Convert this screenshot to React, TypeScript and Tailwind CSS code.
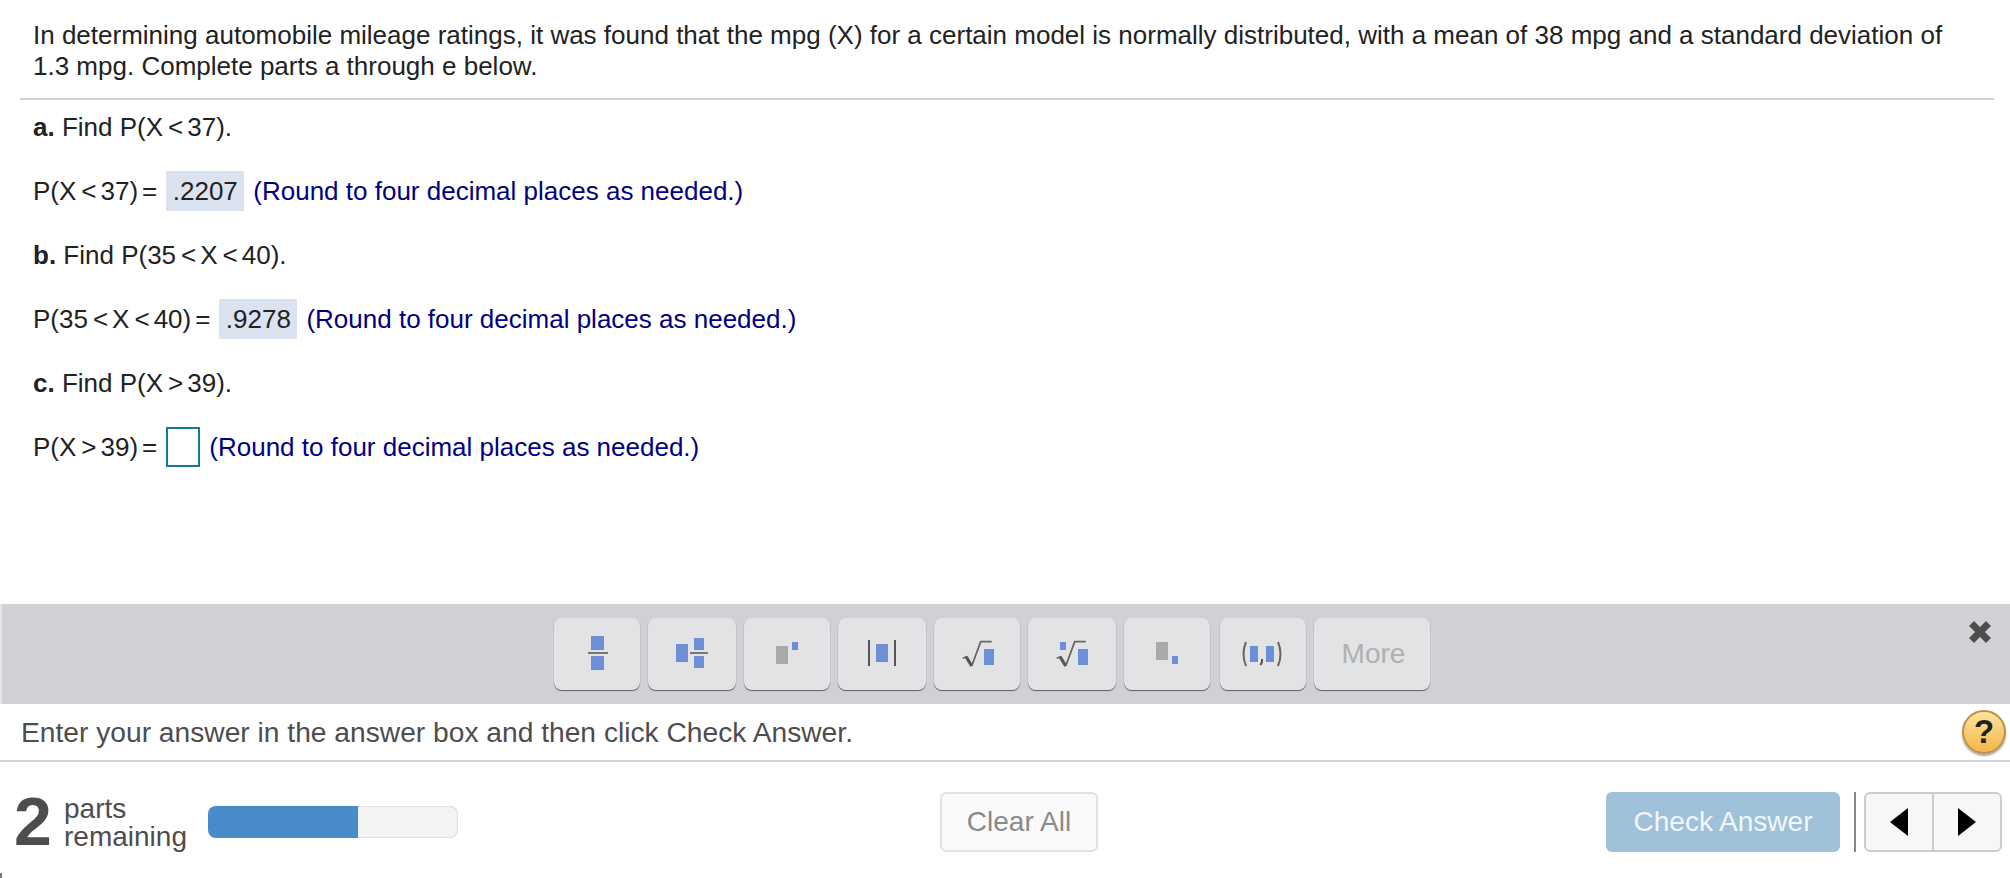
const FONT = "font-['Liberation_Sans',Arial,sans-serif]"

const BLUE = "#6d8fd6"

function Lt() {
  return <span className="mr-[4px] ml-[5px]">&lt;</span>
}

function Gt() {
  return <span className="mr-[4px] ml-[5px]">&gt;</span>
}

function Hint() {
  return <span className="text-[#000080]">(Round to four decimal places as needed.)</span>
}

function Filled({ value }: { value: string }) {
  return <span className="mx-[9px] flex h-10 w-[78px] items-center justify-center bg-[#dbe2f0]">{value}</span>
}

function ToolButton({ width, children }: { width: string; children: React.ReactNode }) {
  return (
    <button className={`${width} flex h-[72px] items-center justify-start rounded-lg bg-[#e2e3e5] shadow-[0_1px_1px_rgba(0,0,0,0.55)]`}>
      {children}
    </button>
  )
}

function Glyph({ children }: { children: React.ReactNode }) {
  return (
    <svg width="86" height="72" viewBox="0 0 86 72" fill="none">
      {children}
    </svg>
  )
}

function Radical() {
  return (
    <>
      <path d="M28.700 40.300l4-1.600" stroke="#666" strokeWidth="1.500" />
      <path d="M32 38.500l5.700 9.500" stroke="#555" strokeWidth="3.200" />
      <path d="M37.700 48l9-24.300h11" stroke="#666" strokeWidth="1.800" />
    </>
  )
}

const TOOLS: React.ReactNode[] = [
  <>
    <rect x="37" y="18" width="13" height="14" fill={BLUE} />
    <rect x="34" y="34" width="20" height="2" fill="#777" />
    <rect x="37" y="38" width="13" height="14" fill={BLUE} />
  </>,
  <>
    <rect x="28" y="26" width="12" height="18" fill={BLUE} />
    <rect x="46" y="20" width="10" height="12" fill={BLUE} />
    <rect x="42" y="34" width="18" height="2" fill="#777" />
    <rect x="46" y="38" width="10" height="12" fill={BLUE} />
  </>,
  <>
    <rect x="32" y="28" width="12" height="18" fill="#aaa" />
    <rect x="48" y="24" width="6" height="8" fill={BLUE} />
  </>,
  <>
    <rect x="30" y="22" width="2" height="26" fill="#555" />
    <rect x="38" y="26" width="12" height="18" fill={BLUE} />
    <rect x="56" y="22" width="2" height="26" fill="#555" />
  </>,
  <>
    <Radical />
    <rect x="50" y="31" width="10" height="16" fill={BLUE} />
  </>,
  <>
    <rect x="32" y="24" width="6" height="8" fill={BLUE} />
    <Radical />
    <rect x="50" y="31" width="10" height="16" fill={BLUE} />
  </>,
  <>
    <rect x="32" y="24" width="12" height="18" fill="#aaa" />
    <rect x="48" y="38" width="6" height="8" fill={BLUE} />
  </>,
  <>
    <path d="M26 24q-5 12 0 24" stroke="#666" strokeWidth="2" />
    <rect x="30" y="28" width="8" height="16" fill={BLUE} />
    <path d="M42 41v3l-1.500 3" stroke="#555" strokeWidth="2" />
    <rect x="46" y="28" width="8" height="16" fill={BLUE} />
    <path d="M58 24q5 12 0 24" stroke="#666" strokeWidth="2" />
  </>,
]

const WIDTHS = ["w-[86px]", "w-[88px]", "w-[86px]", "w-[88px]", "w-[86px]", "w-[88px]", "w-[86px]", "ml-[2px] w-[86px]"]

export default function App() {
  return (
    <div className={`${FONT} relative flex h-[878px] w-[2010px] flex-col overflow-hidden bg-white text-[26px] text-[#222]`}>
      {/* Question */}
      <div className="px-[33px] pt-[20px] pb-[16px] leading-[31px]">
        In determining automobile mileage ratings, it was found that the mpg (X) for a certain model is normally distributed, with a mean of 38 mpg and a standard deviation of
        <br />
        1.3 mpg. Complete parts a through e below.
      </div>
      <div className="mx-[20px] h-[2px] w-[1974px] bg-[#d0d3df]" />

      {/* Parts */}
      <div className="flex flex-col gap-6 px-[33px] pt-[7px] leading-10">
        <div><b>a.</b> Find P(X<Lt />37).</div>
        <div className="flex h-10 items-center">
          P(X<Lt />37)<span className="ml-[4px]">=</span>
          <Filled value=".2207" />
          <Hint />
        </div>
        <div><b>b.</b> Find P(35<Lt />X<Lt />40).</div>
        <div className="flex h-10 items-center">
          P(35<Lt />X<Lt />40)<span className="ml-[4px]">=</span>
          <Filled value=".9278" />
          <Hint />
        </div>
        <div><b>c.</b> Find P(X<Gt />39).</div>
        <div className="flex h-10 items-center">
          P(X<Gt />39)<span className="ml-[4px]">=</span>
          <span className="mr-[9px] ml-[9px] h-10 w-[34px] border-2 border-[#117a9c]" />
          <Hint />
        </div>
      </div>

      {/* Math palette */}
      <div className="mt-[137px] flex h-[100px] items-start border-l-2 border-[#e4e5ea] bg-[#d0d1d7] pt-[14px] pr-[18px] pl-[552px]">
        <div className="flex gap-2">
          {TOOLS.map((glyph, i) => (
            <ToolButton key={i} width={WIDTHS[i]}>
              <Glyph>{glyph}</Glyph>
            </ToolButton>
          ))}
          <ToolButton width="w-[116px]">
            <span className="w-full pl-[3px] text-[28px] text-[#b0b0b0]">More</span>
          </ToolButton>
        </div>
        <svg className="mt-[2px] ml-auto" width="24" height="24" viewBox="0 0 24 24">
          <path d="M3.500 3.500l17 17M20.500 3.500l-17 17" stroke="#4d4d4d" strokeWidth="7" />
        </svg>
      </div>

      {/* Instruction */}
      <div className="flex h-[58px] items-center justify-between border-b-2 border-[#d0d3df] pr-[4px] pl-[21px] text-[28.2px] text-[#4d4d4d]">
        <span>Enter your answer in the answer box and then click Check Answer.</span>
        <span className="flex h-[44px] w-[44px] items-center justify-center rounded-full border-2 border-[#b8944a] bg-[linear-gradient(#fee39a,#f3b64a)] text-[33px] font-bold text-[#222] shadow-[0_2px_2px_rgba(0,0,0,0.35)]">
          ?
        </span>
      </div>

      {/* Footer */}
      <div className="flex flex-1 items-start pt-[30px] text-[28px] text-[#4d4d4d]">
        <span className="mt-[-5px] ml-[14px] w-[50px] text-[68px] leading-[68px] font-bold">2</span>
        <span className="mt-[3px] w-[144px] leading-[28px]">
          parts
          <br />
          remaining
        </span>
        <div className="mt-[14px] h-8 w-[250px] overflow-hidden rounded-lg bg-[#f4f4f4] shadow-[inset_0_0_2px_rgba(0,0,0,0.25)]">
          <div className="h-full w-[150px] bg-[#478bc8]" />
        </div>
        <button className="ml-[482px] h-[60px] w-[158px] rounded-md border-2 border-[#e2e2e2] bg-[#fafafa] text-[#8a8a8a]">
          Clear All
        </button>
        <button className="ml-[508px] h-[60px] w-[234px] rounded-md bg-[#9fc2da] text-[#f2f7fa]">
          Check Answer
        </button>
        <div className="mr-[8px] ml-[14px] h-[60px] w-[2px] bg-[#888]" />
        <div className="flex h-[60px] w-[138px] rounded-md border-2 border-[#ccc] bg-[#f7f7f7]">
          <span className="flex flex-1 items-center justify-center border-r-2 border-[#ccc]">
            <svg width="18" height="28" viewBox="0 0 18 28"><path d="M18 0v28L0 14z" fill="#000" /></svg>
          </span>
          <span className="flex flex-1 items-center justify-center">
            <svg width="18" height="28" viewBox="0 0 18 28"><path d="M0 0v28l18-14z" fill="#000" /></svg>
          </span>
        </div>
      </div>

      {/* window corner */}
      <div className="absolute bottom-0 left-0 h-[5px] w-[2px] bg-[#777]" />
    </div>
  )
}
